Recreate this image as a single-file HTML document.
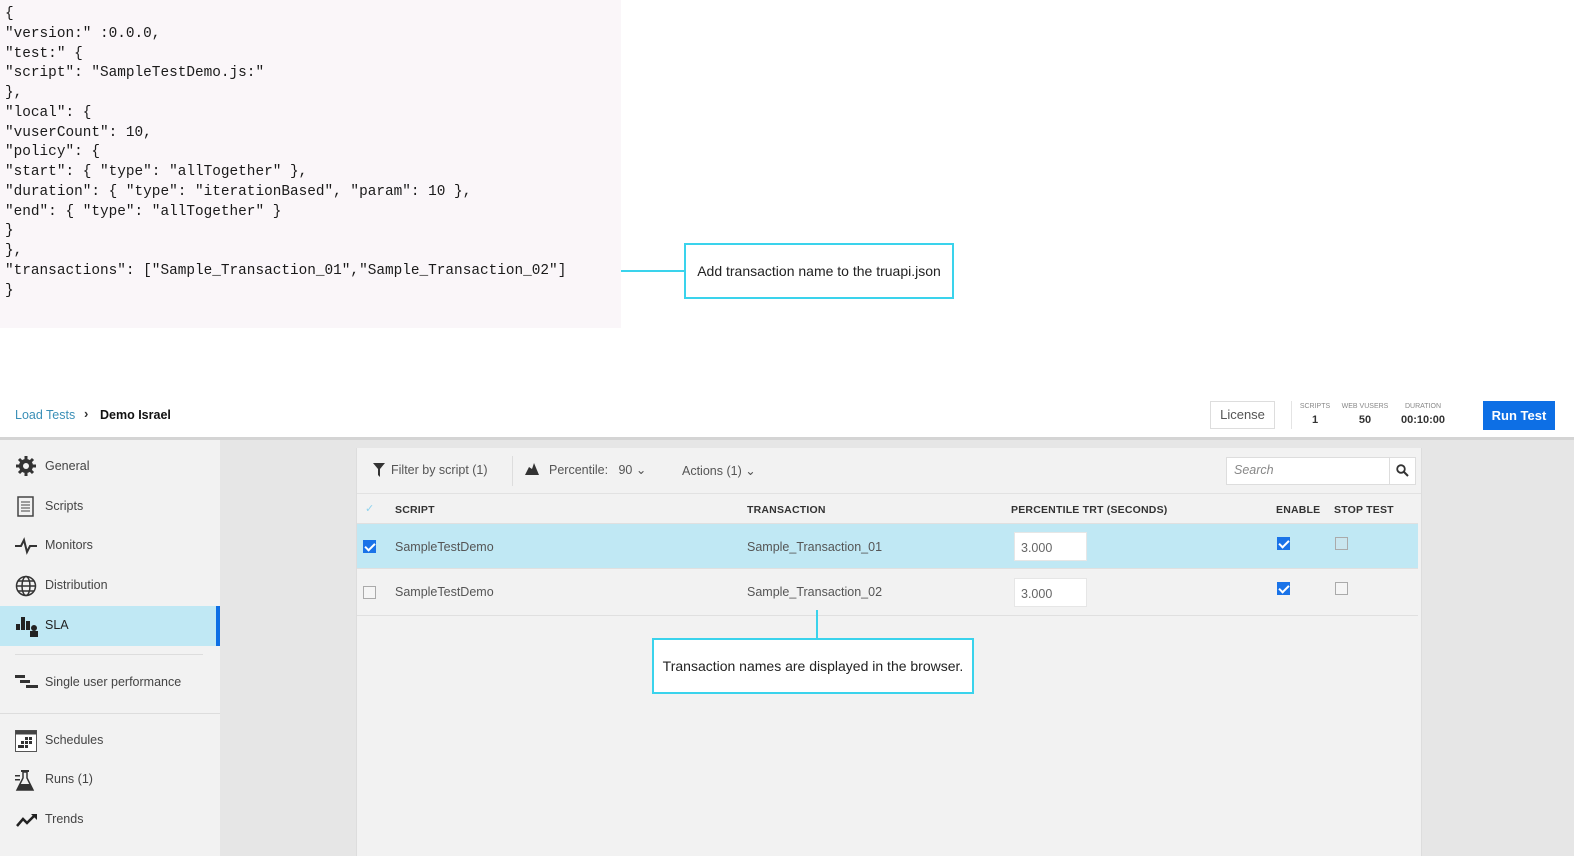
<!DOCTYPE html>
<html><head><meta charset="utf-8">
<style>
*{margin:0;padding:0;box-sizing:border-box}
body{width:1574px;height:856px;background:#fff;position:relative;overflow:hidden;font-family:"Liberation Sans",sans-serif}
.a{position:absolute}
pre{position:absolute;left:0;top:0;width:621px;height:328px;background:#faf6f9;font-family:"Liberation Mono",monospace;font-size:14.4px;line-height:19.75px;color:#1a1a1a;padding:5px 0 0 5px}
.call{position:absolute;border:2px solid #3ad3ec;background:#fff;font-size:14px;color:#222;display:flex;align-items:center;justify-content:center}
.s{font-size:12.5px;color:#555}
.side{font-size:12.5px;color:#444}
.hd{font-size:10.5px;font-weight:bold;color:#333;letter-spacing:.2px}
.cb{position:absolute;width:13px;height:13px;border:1px solid #aaa;background:#f5f5f5}
.cb.on{background:#1a73e8;border-color:#1a73e8}
.cb.on:after{content:"";position:absolute;left:3px;top:0px;width:4px;height:8px;border:solid #fff;border-width:0 2px 2px 0;transform:rotate(45deg)}
.inp{position:absolute;width:73px;height:29px;background:#fff;border:1px solid #e6e6e6;font-size:12.5px;color:#666;padding:8px 6px}
</style></head><body>
<pre>{
"version:" :0.0.0,
"test:" {
"script": "SampleTestDemo.js:"
},
"local": {
"vuserCount": 10,
"policy": {
"start": { "type": "allTogether" },
"duration": { "type": "iterationBased", "param": 10 },
"end": { "type": "allTogether" }
}
},
"transactions": ["Sample_Transaction_01","Sample_Transaction_02"]
}</pre>
<div class="a" style="left:621px;top:270px;width:63px;height:2px;background:#3ad3ec"></div>
<div class="call" style="left:684px;top:243px;width:270px;height:56px">Add transaction name to the truapi.json</div>

<div class="a" style="left:15px;top:408px;font-size:12.5px;color:#3a8fb7">Load Tests</div>
<div class="a" style="left:84px;top:406px;font-size:13px;color:#333;font-weight:bold">›</div>
<div class="a" style="left:100px;top:408px;font-size:12.5px;color:#111;font-weight:bold">Demo Israel</div>
<div class="a" style="left:1210px;top:401px;width:65px;height:28px;border:1px solid #ddd;font-size:13px;color:#555;text-align:center;line-height:26px">License</div>
<div class="a" style="left:1291px;top:401px;width:1px;height:28px;background:#e4e4e4"></div>
<div class="a" style="left:1298px;top:403px;font-size:7px;color:#888;width:34px;text-align:center">SCRIPTS</div>
<div class="a" style="left:1298px;top:414px;font-size:11px;color:#333;width:34px;text-align:center;font-weight:bold">1</div>
<div class="a" style="left:1340px;top:403px;font-size:7px;color:#888;width:50px;text-align:center">WEB VUSERS</div>
<div class="a" style="left:1340px;top:414px;font-size:11px;color:#333;width:50px;text-align:center;font-weight:bold">50</div>
<div class="a" style="left:1398px;top:403px;font-size:7px;color:#888;width:50px;text-align:center">DURATION</div>
<div class="a" style="left:1398px;top:414px;font-size:11px;color:#333;width:50px;text-align:center;font-weight:bold">00:10:00</div>
<div class="a" style="left:1483px;top:401px;width:72px;height:29px;background:#0d6fe5;color:#fff;font-size:13px;font-weight:bold;text-align:center;line-height:29px">Run Test</div>
<div class="a" style="left:0;top:437px;width:1574px;height:3px;background:#d4d4d4"></div>

<div class="a" style="left:0;top:440px;width:220px;height:416px;background:#f2f2f2"></div>
<div class="a" style="left:220px;top:440px;width:1354px;height:416px;background:#e6e6e6"></div>
<div class="a" style="left:0;top:606px;width:216px;height:40px;background:#c0e8f4"></div>
<div class="a" style="left:216px;top:606px;width:4px;height:40px;background:#0d6fe5"></div>
<div class="a" style="left:15px;top:654px;width:188px;height:1px;background:#ddd"></div>
<div class="a" style="left:0;top:713px;width:220px;height:1px;background:#ddd"></div>
<svg class="a" style="left:15px;top:455px" width="22" height="22" viewBox="0 0 22 22"><circle cx="11" cy="11" r="7" fill="#333"/><g stroke="#333" stroke-width="3"><line x1="11" y1="1" x2="11" y2="21"/><line x1="1" y1="11" x2="21" y2="11"/><line x1="4" y1="4" x2="18" y2="18"/><line x1="18" y1="4" x2="4" y2="18"/></g><circle cx="11" cy="11" r="3" fill="#f2f2f2"/></svg>
<div class="a side" style="left:45px;top:459px">General</div>
<svg class="a" style="left:15px;top:496px" width="22" height="22"><rect x="3" y="1" width="15" height="19" fill="none" stroke="#444" stroke-width="1.5"/><g stroke="#444"><line x1="6" y1="6" x2="15" y2="6"/><line x1="6" y1="9" x2="15" y2="9"/><line x1="6" y1="12" x2="15" y2="12"/><line x1="6" y1="15" x2="15" y2="15"/></g></svg>
<div class="a side" style="left:45px;top:499px">Scripts</div>
<svg class="a" style="left:14px;top:536px" width="24" height="20"><path d="M1 10 H7 L10 4 L13 16 L16 10 H23" fill="none" stroke="#333" stroke-width="2"/></svg>
<div class="a side" style="left:45px;top:538px">Monitors</div>
<svg class="a" style="left:15px;top:575px" width="22" height="22"><g fill="none" stroke="#333" stroke-width="1.5"><circle cx="11" cy="11" r="9.5"/><ellipse cx="11" cy="11" rx="4" ry="9.5"/><line x1="1.5" y1="11" x2="20.5" y2="11"/><line x1="3" y1="6" x2="19" y2="6"/><line x1="3" y1="16" x2="19" y2="16"/></g></svg>
<div class="a side" style="left:45px;top:578px">Distribution</div>
<svg class="a" style="left:15px;top:614px" width="24" height="24"><g fill="#222"><rect x="1" y="10" width="4" height="6"/><rect x="6" y="3" width="4" height="13"/><rect x="11" y="7" width="4" height="9"/><circle cx="19" cy="14" r="3"/><rect x="15" y="17" width="8" height="6"/></g></svg>
<div class="a side" style="left:45px;top:618px;color:#222">SLA</div>
<svg class="a" style="left:14px;top:673px" width="26" height="20"><g fill="#333"><rect x="1" y="2" width="10" height="3"/><rect x="6" y="7" width="10" height="3"/><rect x="12" y="12" width="12" height="3"/></g></svg>
<div class="a side" style="left:45px;top:675px">Single user performance</div>
<svg class="a" style="left:15px;top:730px" width="22" height="22"><rect x="0.5" y="0.5" width="21" height="21" fill="#fff" stroke="#555"/><rect x="0.5" y="0.5" width="21" height="4" fill="#444"/><g fill="#333"><rect x="10" y="7" width="3" height="3"/><rect x="14" y="7" width="3" height="3"/><rect x="6" y="11" width="3" height="3"/><rect x="10" y="11" width="3" height="3"/><rect x="14" y="11" width="3" height="3"/><rect x="3" y="15" width="3" height="3"/><rect x="6" y="15" width="3" height="3"/><rect x="10" y="15" width="3" height="3"/></g></svg>
<div class="a side" style="left:45px;top:733px">Schedules</div>
<svg class="a" style="left:14px;top:769px" width="22" height="24"><g fill="#333"><rect x="7" y="1" width="8" height="2"/><path d="M9 3 H13 V9 L19 21 H3 L9 9 Z" fill="none" stroke="#333" stroke-width="1.5"/><path d="M6 15 H16 L19 21 H3 Z"/><rect x="1" y="6" width="5" height="1.5"/><rect x="1" y="10" width="5" height="1.5"/></g></svg>
<div class="a side" style="left:45px;top:772px">Runs (1)</div>
<svg class="a" style="left:15px;top:811px" width="24" height="18"><path d="M2 15 L8 8 L12 12 L20 4" fill="none" stroke="#222" stroke-width="2.5"/><path d="M16 3 H22 V9 Z" fill="#222"/></svg>
<div class="a side" style="left:45px;top:812px">Trends</div>

<div class="a" style="left:356px;top:448px;width:1066px;height:408px;background:#f2f2f2;border-left:1px solid #ddd;border-right:1px solid #ddd"></div>
<svg class="a" style="left:373px;top:463px" width="12" height="14"><path d="M0 0 H12 L7 6 V14 L5 12 V6 Z" fill="#333"/></svg>
<div class="a s" style="left:391px;top:463px">Filter by script (1)</div>
<div class="a" style="left:512px;top:456px;width:1px;height:30px;background:#ddd"></div>
<svg class="a" style="left:525px;top:463px" width="14" height="12"><path d="M0 12 L4 4 L7 6 L9 0 L14 12Z" fill="#333"/></svg>
<div class="a s" style="left:549px;top:462px">Percentile: &nbsp;&nbsp;90 ⌄</div>
<div class="a s" style="left:682px;top:463px">Actions (1) ⌄</div>
<div class="a" style="left:1226px;top:457px;width:190px;height:28px;background:#fff;border:1px solid #ddd"></div>
<div class="a" style="left:1389px;top:457px;width:1px;height:28px;background:#ddd"></div>
<div class="a" style="left:1234px;top:463px;font-size:12.5px;font-style:italic;color:#888">Search</div>
<svg class="a" style="left:1396px;top:464px" width="13" height="13"><circle cx="5" cy="5" r="3.8" fill="none" stroke="#333" stroke-width="1.8"/><line x1="8" y1="8" x2="12" y2="12" stroke="#333" stroke-width="2"/></svg>
<div class="a" style="left:357px;top:493px;width:1064px;height:1px;background:#e2e2e2"></div>
<div class="a" style="left:365px;top:502px;font-size:11px;color:#8fd3ee">✓</div>
<div class="a hd" style="left:395px;top:504px">SCRIPT</div>
<div class="a hd" style="left:747px;top:504px">TRANSACTION</div>
<div class="a hd" style="left:1011px;top:504px">PERCENTILE TRT (SECONDS)</div>
<div class="a hd" style="left:1276px;top:504px">ENABLE</div>
<div class="a hd" style="left:1334px;top:504px">STOP TEST</div>
<div class="a" style="left:357px;top:523px;width:1061px;height:46px;background:#c0e8f4;border-top:1px solid #e0e0e0;border-bottom:1px solid #e0e0e0"></div>
<div class="cb on a" style="left:363px;top:540px"></div>
<div class="a s" style="left:395px;top:540px">SampleTestDemo</div>
<div class="a s" style="left:747px;top:540px">Sample_Transaction_01</div>
<div class="inp" style="left:1014px;top:532px">3.000</div>
<div class="cb on a" style="left:1277px;top:537px"></div>
<div class="cb a" style="left:1335px;top:537px;background:#c9e6ef"></div>
<div class="cb a" style="left:363px;top:586px"></div>
<div class="a s" style="left:395px;top:585px">SampleTestDemo</div>
<div class="a s" style="left:747px;top:585px">Sample_Transaction_02</div>
<div class="inp" style="left:1014px;top:578px">3.000</div>
<div class="cb on a" style="left:1277px;top:582px"></div>
<div class="cb a" style="left:1335px;top:582px"></div>
<div class="a" style="left:357px;top:615px;width:1061px;height:1px;background:#e0e0e0"></div>
<div class="a" style="left:816px;top:610px;width:2px;height:28px;background:#3ad3ec"></div>
<div class="call" style="left:652px;top:638px;width:322px;height:56px">Transaction names are displayed in the browser.</div>
</body></html>
